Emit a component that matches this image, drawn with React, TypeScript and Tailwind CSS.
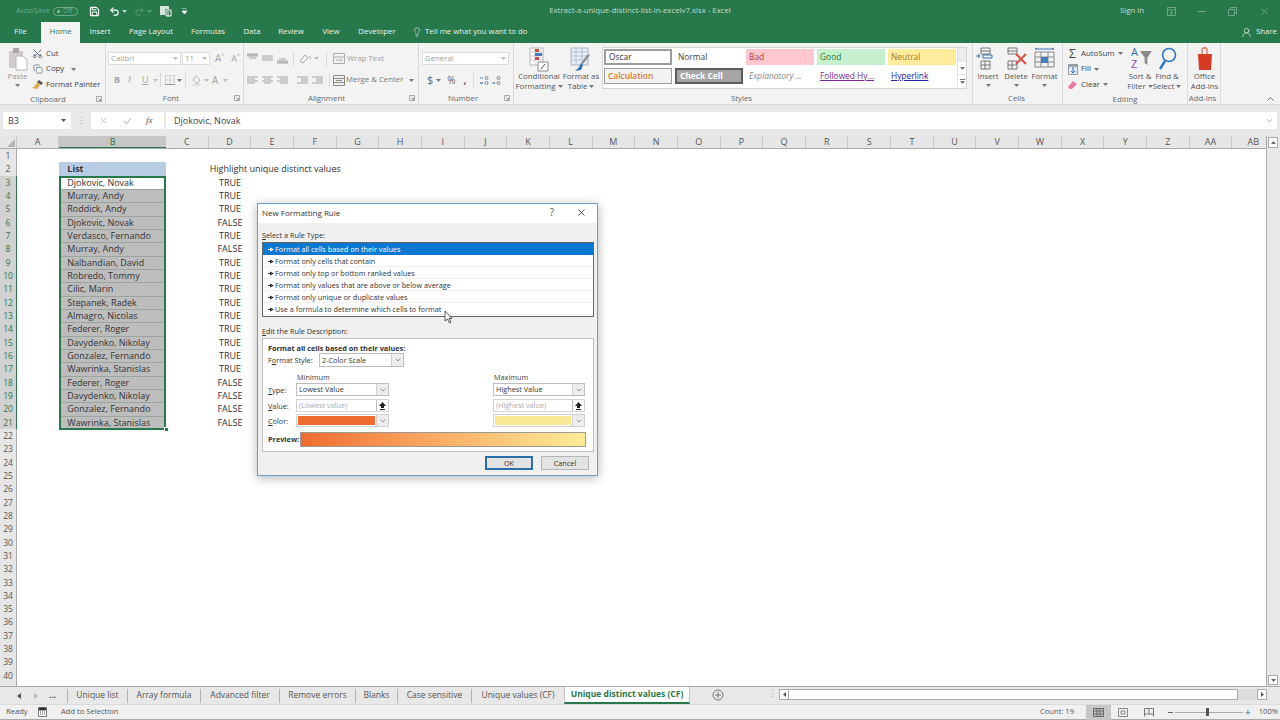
import { ChevronDown, Copy, Lightbulb, Redo2, Save, Scissors, Undo2, UserRound, X } from 'lucide-react'
import type { ReactNode } from 'react'

const NAMES = ['Djokovic, Novak', 'Murray, Andy', 'Roddick, Andy', 'Djokovic, Novak', 'Verdasco, Fernando', 'Murray, Andy', 'Nalbandian, David', 'Robredo, Tommy', 'Cilic, Marin', 'Stepanek, Radek', 'Almagro, Nicolas', 'Federer, Roger', 'Davydenko, Nikolay', 'Gonzalez, Fernando', 'Wawrinka, Stanislas', 'Federer, Roger', 'Davydenko, Nikolay', 'Gonzalez, Fernando', 'Wawrinka, Stanislas']
const FLAGS = ['TRUE', 'TRUE', 'TRUE', 'FALSE', 'TRUE', 'FALSE', 'TRUE', 'TRUE', 'TRUE', 'TRUE', 'TRUE', 'TRUE', 'TRUE', 'TRUE', 'TRUE', 'FALSE', 'FALSE', 'FALSE', 'FALSE']
const COLS = ['C', 'D', 'E', 'F', 'G', 'H', 'I', 'J', 'K', 'L', 'M', 'N', 'O', 'P', 'Q', 'R', 'S', 'T', 'U', 'V', 'W', 'X', 'Y', 'Z', 'AA', 'AB']
const RULES = ['Format all cells based on their values', 'Format only cells that contain', 'Format only top or bottom ranked values', 'Format only values that are above or below average', 'Format only unique or duplicate values', 'Use a formula to determine which cells to format']
const ROWS = Array.from({ length: 40 }, (_, i) => i + 1)

function Caret({ className = 'text-[#777]' }: { className?: string }) {
  return <svg width="5" height="3" viewBox="0 0 5 3" className={className}><path d="M0 0h5L2.5 3z" fill="currentColor" /></svg>
}

function Launcher() {
  return <svg width="6" height="6" viewBox="0 0 6 6" className="text-[#888]"><path d="M.5 5.5v-5h5v5zM2 2l2.5 2.5M4.5 3v1.5H3" fill="none" stroke="currentColor" strokeWidth=".7" /></svg>
}

function Group({ className, label, launcher, children }: { className: string; label?: string; launcher?: boolean; children: ReactNode }) {
  return (
    <div className={`flex h-full shrink-0 flex-col border-r border-[#dadada] ${className}`}>
      <div className="flex h-[50px]">{children}</div>
      <div className="flex h-[12px] items-center pr-[3px]">
        <span className="flex-1 whitespace-nowrap text-center text-[7.8px] leading-[12px] text-[#666]">{label}</span>
        {launcher && <Launcher />}
      </div>
    </div>
  )
}

function Tall({ className, icon, lines, caret }: { className: string; icon: ReactNode; lines: ReactNode[]; caret?: boolean }) {
  return (
    <div className={`flex shrink-0 flex-col items-center text-[7.8px] leading-[10px] text-[#555] ${className}`}>
      <div className="flex h-[28px] items-start justify-center pt-[4px]">{icon}</div>
      {lines.map((l, i) => <div key={i} className="flex h-[10px] items-center gap-[2px] whitespace-nowrap">{l}</div>)}
      {caret && <div className="mt-[3px]"><Caret /></div>}
    </div>
  )
}

function SmallRow({ icon, text, caret, caretClass = 'ml-[7px]' }: { icon: ReactNode; text: string; caret?: boolean; caretClass?: string }) {
  return (
    <div className="flex h-[15.5px] items-center whitespace-nowrap text-[7.8px] text-[#444]">
      <span className="flex w-[13px] justify-center">{icon}</span>
      <span className="ml-[2px]">{text}</span>
      {caret && <span className={caretClass}><Caret /></span>}
    </div>
  )
}

function Lines({ rows }: { rows: number[][] }) {
  return (
    <svg width="13" height="11" viewBox="0 0 13 11">
      {rows.map(([y, a, b], i) => <path key={i} d={`M${a} ${y}H${b}`} stroke="#a5a5a5" strokeWidth="1" />)}
    </svg>
  )
}

function Sep({ className = 'h-[14px]' }: { className?: string }) {
  return <div className={`w-px shrink-0 bg-[#d8d8d8] ${className}`} />
}

function GridIcon({ children }: { children?: ReactNode }) {
  return (
    <svg width="26" height="24" viewBox="0 0 26 24" fill="none">
      {children}
    </svg>
  )
}

function Titlebar() {
  return (
    <div className="flex h-[22px] items-center whitespace-nowrap bg-[#27784a] text-white [&>*]:shrink-0">
      <span className="ml-[16px] w-[34px] text-[7.8px] text-[#6fa98a]">AutoSave</span>
      <span className="ml-[3px] flex h-[9px] w-[25px] items-center gap-[3px] rounded-full border border-[#6fa98a] pl-[3px] text-[6.5px] text-[#6fa98a]">
        <span className="h-[3px] w-[3px] rounded-full bg-[#8fc0a5]" />Off
      </span>
      <Save size={11} className="ml-[11px]" strokeWidth={2.2} />
      <Undo2 size={11} className="ml-[9px]" strokeWidth={2.4} />
      <span className="ml-[2px]"><Caret className="text-[#bcd8c8]" /></span>
      <Redo2 size={11} className="ml-[7px] text-[#5f9f7c]" />
      <span className="ml-[2px]"><Caret className="text-[#5f9f7c]" /></span>
      <svg width="13" height="12" viewBox="0 0 13 12" className="ml-[7px]"><path d="M1 1h9v3H6v6H1z" fill="#d7e6dd" /><path d="M7 5h5v6H7z" fill="none" stroke="#fff" /><path d="M9 6v5" stroke="#fff" /></svg>
      <svg width="5" height="6" viewBox="0 0 5 6" className="ml-[10px]"><path d="M0 0h5M0 3h5L2.5 6z" stroke="#fff" strokeWidth=".8" fill="#fff" /></svg>
      <span className="ml-[349px] w-[208px] text-center text-[7.8px] text-[#c4dccf]">Extract-a-unique-distinct-list-in-excelv7.xlsx  -  Excel</span>
      <span className="ml-[367px] w-[42px] text-center text-[7.8px] text-[#c4dccf]">Sign in</span>
      <svg width="9" height="9" viewBox="0 0 9 9" className="ml-[14px] text-[#6fa98a]"><path d="M.5.5h8v8h-8zM.5 3h8M4.5 4.5v3M3 6h3" fill="none" stroke="currentColor" /></svg>
      <span className="ml-[22px] h-px w-[8px] bg-[#6fa98a]" />
      <svg width="9" height="9" viewBox="0 0 9 9" className="ml-[22px] text-[#6fa98a]"><path d="M.5 2.500h6v6h-6zM2.500 2.500v-2h6v6h-2" fill="none" stroke="currentColor" /></svg>
      <X size={11} className="ml-[22px] text-[#6fa98a]" />
    </div>
  )
}

function Tabs() {
  const tabs: [string, string][] = [['Insert', 'w-[40px]'], ['Page Layout', 'w-[62px]'], ['Formulas', 'w-[52px]'], ['Data', 'w-[36px]'], ['Review', 'w-[42px]'], ['View', 'w-[38px]'], ['Developer', 'w-[54px]']]
  return (
    <div className="flex h-[21px] whitespace-nowrap bg-[#27784a] pr-[3px] text-[7.8px] text-[#eaf3ee] [&>*]:shrink-0">
      <span className="flex w-[41px] items-center justify-center pb-[1px]">File</span>
      <span className="flex w-[39px] items-center justify-center bg-[#f3f3f3] pb-[1px] text-[#27784a]">Home</span>
      {tabs.map(([t, w]) => <span key={t} className={`flex items-center justify-center pb-[1px] ${w}`}>{t}</span>)}
      <Lightbulb size={10} className="ml-[8px] mt-[5px]" strokeWidth={1.4} />
      <span className="ml-[3px] flex items-center pb-[1px]">Tell me what you want to do</span>
      <UserRound size={11} className="ml-auto mt-[5px]" strokeWidth={1.4} />
      <span className="ml-[4px] flex items-center pb-[1px]">Share</span>
    </div>
  )
}

function StyleCell({ className, children }: { className: string; children: string }) {
  return <div className={`flex h-[16px] w-[68px] shrink-0 items-center overflow-hidden whitespace-nowrap pl-[3px] text-[8.4px] ${className}`}>{children}</div>
}

function Ribbon() {
  return (
    <div className="flex h-[62px] border-b border-[#d6d6d6] bg-[#f3f3f3] pr-[4px]">
      <Group className="w-[106px]" label="Clipboard" launcher>
        <Tall className="w-[31px] pl-[4px]" caret lines={[<span className="text-[#999]">Paste</span>]} icon={
          <svg width="20" height="24" viewBox="0 0 20 24"><path d="M1 4h14v17H1z" fill="#cfcbcb" /><path d="M5 1h6v5H5z" fill="#a9a6a6" /><path d="M8 9h7l4 4v10H8z" fill="#fff" stroke="#b5b5b5" /></svg>
        } />
        <div className="pt-[3px]">
          <SmallRow text="Cut" icon={<Scissors size={11} className="-rotate-90 text-[#5b6b7d]" />} />
          <SmallRow text="Copy" caret icon={<Copy size={10} className="text-[#7b8b9b]" />} />
          <SmallRow text="Format Painter" icon={
            <svg width="12" height="11" viewBox="0 0 12 11"><path d="M7 1l4 3-2 2-4-3z" fill="#555" /><path d="M5 3l3 3-3 4-5-1c2-1 4-3 5-6z" fill="#dca94a" /></svg>
          } />
        </div>
      </Group>

      <Group className="w-[138px] pl-[2px]" label="Font" launcher>
        <div className="flex flex-col">
          <div className="mt-[9px] flex h-[13px] items-center">
            <div className="flex h-[13px] w-[73px] items-center justify-between border border-[#dcdcdc] bg-white px-[2px] text-[7.8px] text-[#a0a0a0]">Calibri<Caret className="text-[#bbb]" /></div>
            <div className="ml-px flex h-[13px] w-[28px] items-center justify-between border border-[#dcdcdc] bg-white px-[2px] text-[7.8px] text-[#a0a0a0]">11<Caret className="text-[#bbb]" /></div>
            <span className="ml-[5px] text-[10px] text-[#a5a5a5]">A</span><span className="mb-[5px] text-[5px] text-[#a5a5a5]">˄</span>
            <span className="ml-[7px] text-[9px] text-[#a5a5a5]">A</span><span className="mb-[5px] text-[5px] text-[#a5a5a5]">˅</span>
          </div>
          <div className="mt-[8px] flex h-[14px] items-center text-[9px] text-[#a5a5a5]">
            <span className="ml-[6px] w-[14px] font-bold">B</span>
            <span className="w-[14px] italic font-['Liberation_Serif']">I</span>
            <span className="w-[10px] underline">U</span>
            <span className="ml-[1px] w-[7px]"><Caret className="text-[#bbb]" /></span>
            <Sep />
            <span className="ml-[4px]"><svg width="10" height="10" viewBox="0 0 10 10"><path d="M.5.5h9v9h-9zM5 .5v9M.5 5h9" stroke="#b5b5b5" fill="none" strokeDasharray="1 1" /><path d="M0 9.5h10" stroke="#999" /></svg></span>
            <span className="ml-[2px] w-[6px]"><Caret /></span>
            <span className="ml-[2px]"><Sep /></span>
            <span className="ml-[5px]"><svg width="11" height="11" viewBox="0 0 11 11"><path d="M5 1l4 4-3 4-4-4z" fill="none" stroke="#b5b5b5" /><path d="M1 9h9v2H1z" fill="#e4e4e4" /></svg></span>
            <span className="ml-[2px] w-[8px]"><Caret className="text-[#bbb]" /></span>
            <span className="w-[8px] text-[10px]">A</span>
            <span className="ml-[3px]"><Caret className="text-[#bbb]" /></span>
          </div>
        </div>
      </Group>

      <Group className="w-[175px]" label="Alignment" launcher>
        <div className="flex flex-col whitespace-nowrap pl-[2px]">
          <div className="mt-[9px] flex h-[13px] items-center">
            <Lines rows={[[1, 1, 12], [2, 1, 12], [3, 1, 12], [5, 3, 10]]} />
            <span className="ml-[2px]"><Lines rows={[[3, 1, 12], [5, 1, 12], [7, 1, 12]]} /></span>
            <span className="ml-[2px]"><Lines rows={[[6, 3, 10], [8, 1, 12], [9, 1, 12], [10, 1, 12]]} /></span>
            <span className="mx-[4px]"><Sep /></span>
            <svg width="13" height="11" viewBox="0 0 13 11" className="ml-[1px]"><path d="M1 8l5-6 3 3-5 5zM10 3l2 3" stroke="#a8a8a8" fill="none" /></svg>
            <span className="ml-[2px]"><Caret className="text-[#bbb]" /></span>
            <span className="ml-[7px]"><Sep /></span>
            <svg width="12" height="11" viewBox="0 0 12 11" className="ml-[6px]"><path d="M.5.5h11v10H.5zM.5 4h11M3 7h6l-1-1M9 7l-1 1" stroke="#aaa" fill="none" /></svg>
            <span className="ml-[2px] text-[7.8px] text-[#a0a0a0]">Wrap Text</span>
          </div>
          <div className="mt-[8px] flex h-[14px] items-center">
            <Lines rows={[[2, 1, 12], [4, 1, 9], [6, 1, 12], [8, 1, 9]]} />
            <span className="ml-[2px]"><Lines rows={[[2, 1, 12], [4, 3, 10], [6, 1, 12], [8, 3, 10]]} /></span>
            <span className="ml-[2px]"><Lines rows={[[2, 1, 12], [4, 4, 12], [6, 1, 12], [8, 4, 12]]} /></span>
            <span className="w-[7px]" />
            <Lines rows={[[2, 1, 12], [4, 5, 12], [6, 5, 12], [8, 1, 12]]} />
            <span className="ml-[2px]"><Lines rows={[[2, 1, 12], [4, 5, 12], [6, 5, 12], [8, 1, 12]]} /></span>
            <span className="ml-[5px]"><Sep /></span>
            <svg width="12" height="11" viewBox="0 0 12 11" className="ml-[3px]"><path d="M.5.5h11v10H.5zM.5 3.500h11M.5 7.500h11M3 5.500h6" stroke="#888" fill="none" /></svg>
            <span className="ml-px text-[7.8px] text-[#777]">Merge &amp; Center</span>
            <span className="ml-[6px]"><Caret /></span>
          </div>
        </div>
      </Group>

      <Group className="w-[95px] pl-[3px]" label="Number" launcher>
        <div className="flex flex-col">
          <div className="mt-[9px] flex h-[13px] w-[87px] items-center justify-between border border-[#dcdcdc] bg-white px-[2px] text-[7.8px] text-[#a0a0a0]">General<Caret className="text-[#bbb]" /></div>
          <div className="mt-[8px] flex h-[14px] items-center text-[#666]">
            <span className="ml-[5px] text-[11px]">$</span>
            <span className="ml-[3px]"><Caret /></span>
            <span className="ml-[6px] text-[10px]">%</span>
            <span className="ml-[8px] text-[10px] font-bold">,</span>
            <span className="ml-[7px]"><Sep /></span>
            <svg width="11" height="11" viewBox="0 0 11 11" className="ml-[5px]"><path d="M1 3h3M1 8h3l-1-1M1 8l2 1" stroke="#5b86b5" fill="none" /><circle cx="7.5" cy="3" r="1.5" fill="none" stroke="#888" /><circle cx="7.5" cy="8" r="1.5" fill="none" stroke="#888" /></svg>
            <svg width="11" height="11" viewBox="0 0 11 11" className="ml-[1px]"><circle cx="7.5" cy="3" r="1.5" fill="none" stroke="#888" /><circle cx="7.5" cy="8" r="1.5" fill="none" stroke="#888" /><path d="M1 8h3l-1-1M4 8l-1 1" stroke="#5b86b5" fill="none" /></svg>
          </div>
        </div>
      </Group>

      <Group className="w-[459px]" label="Styles">
        <Tall className="w-[50px]" lines={['Conditional', <>Formatting <Caret /></>]} icon={
          <svg width="20" height="25" viewBox="0 0 20 25"><path d="M1 1h13v17H1z" fill="#fff" stroke="#b5b5b5" /><path d="M6 1v17M1 5h13M1 9h13M1 13h13" stroke="#cfcfcf" /><path d="M6 2h4v3H6z" fill="#d9453a" /><path d="M6 6h7v3H6z" fill="#3f7fc0" /><path d="M6 10h4v3H6z" fill="#d9453a" /><path d="M9 15h10v9H9z" fill="#fff" stroke="#8a8a8a" /><path d="M12 22l4-5" stroke="#555" /></svg>
        } />
        <Tall className="w-[34px]" lines={['Format as', <>Table <Caret /></>]} icon={
          <svg width="22" height="25" viewBox="0 0 22 25"><path d="M1 1h17v17H1z" fill="#e6edf6" stroke="#a9b4c2" /><path d="M1 5h17M1 9h17M1 13h17M6 1v17M12 1v17" stroke="#b7c2d1" /><path d="M20 8l-7 9-2-1 7-9z" fill="#8d8d8d" /><path d="M11 16l2 2-2 5-6 1c3-2 5-5 6-8z" fill="#2f6fb5" /></svg>
        } />
        <div className="ml-[4px] mt-[4px] flex h-[42px] w-[365px] shrink-0 border border-[#d4d4d4] bg-white">
          <div className="flex flex-1 flex-col justify-between p-px">
            <div className="flex gap-[3px]">
              <StyleCell className="border-2 border-[#9c9c9c] bg-white text-[#333]">Oscar</StyleCell>
              <StyleCell className="text-[#444]">Normal</StyleCell>
              <StyleCell className="bg-[#ffc7ce] text-[#b03a45]">Bad</StyleCell>
              <StyleCell className="bg-[#c6efce] text-[#2a7a33]">Good</StyleCell>
              <StyleCell className="bg-[#ffeb9c] text-[#a9761a]">Neutral</StyleCell>
            </div>
            <div className="mb-[3px] flex gap-[3px]">
              <StyleCell className="border border-[#9c9c9c] bg-[#f2f2f2] font-semibold text-[#e0791f]">Calculation</StyleCell>
              <StyleCell className="border-2 border-[#5c5c5c] bg-[#a5a5a5] font-bold text-white">Check Cell</StyleCell>
              <StyleCell className="italic text-[#888]">Explanatory ...</StyleCell>
              <StyleCell className="text-[#7a2a90] underline">Followed Hy...</StyleCell>
              <StyleCell className="text-[#2222aa] underline">Hyperlink</StyleCell>
            </div>
          </div>
          <div className="flex w-[10px] flex-col border-l border-[#e2e2e2]">
            <div className="h-[14px] border-b border-[#e2e2e2] bg-[#ececec]" />
            <div className="flex h-[13px] items-center justify-center border-b border-[#e2e2e2]"><Caret /></div>
            <div className="flex flex-1 flex-col items-center justify-center gap-[1px]"><span className="h-px w-[5px] bg-[#777]" /><Caret /></div>
          </div>
        </div>
      </Group>

      <Group className="w-[90px] pl-[1px]" label="Cells">
        <Tall className="w-[28px]" caret lines={['Insert']} icon={
          <GridIcon><path d="M6 1h9v6H6zM6 4h9M6 14h9v8H6zM10 14v8M6 18h9" stroke="#777" /><path d="M1 9h4l-2-2M5 9l-2 2M8 8h9v3H8z" stroke="#3470b3" /></GridIcon>
        } />
        <Tall className="w-[28px]" caret lines={['Delete']} icon={
          <GridIcon><path d="M5 1h9v6H5zM5 4h9M5 14h9v8H5zM9 14v8M5 18h9" stroke="#777" /><path d="M13 7l10 10M23 7L13 17" stroke="#d9503f" strokeWidth="2" /></GridIcon>
        } />
        <Tall className="w-[29px]" caret lines={['Format']} icon={
          <GridIcon><path d="M3 5h19v15H3zM3 10h19M3 15h19M9 5v15M16 5v15" stroke="#888" /><path d="M3 2h19M3 2l2-1M22 2l-2-1" stroke="#3470b3" /><path d="M9 10h7v6H9z" fill="#3f7fc0" /></GridIcon>
        } />
      </Group>

      <Group className="w-[125px] pl-[3px]" label="Editing">
        <div className="w-[61px] shrink-0 pt-[3px]">
          <SmallRow text="AutoSum" caret caretClass="ml-[4px]" icon={<span className="text-[12px] leading-[12px] text-[#444]">Σ</span>} />
          <SmallRow text="Fill" caret caretClass="ml-[3px]" icon={<svg width="10" height="11" viewBox="0 0 10 11"><path d="M.5.5h9v10h-9z" fill="#dde8f4" stroke="#999" /><path d="M.5 2h9" stroke="#666" /><path d="M5 3v6M3 7l2 2 2-2" stroke="#2f6fb5" fill="none" /></svg>} />
          <SmallRow text="Clear" caret caretClass="ml-[3px]" icon={<svg width="11" height="10" viewBox="0 0 11 10"><path d="M1 7l5-6 4 3-5 5H3z" fill="#e97aa0" /></svg>} />
        </div>
        <Tall className="w-[26px]" lines={['Sort &', <>Filter <Caret /></>]} icon={
          <div className="relative h-[24px] w-[24px]">
            <span className="absolute left-[3px] top-[-2px] text-[11px] leading-[13px] text-[#2f6fb5]">A</span>
            <span className="absolute left-[3px] top-[10px] text-[11px] leading-[13px] text-[#8e4aa8]">Z</span>
            <svg width="12" height="15" viewBox="0 0 13 16" className="absolute left-[12px] top-[4px]"><path d="M0 0h13L8 7v8l-3-2V7z" fill="#8b8b8b" /></svg>
          </div>
        } />
        <Tall className="w-[28px]" lines={['Find &', <>Select <Caret /></>]} icon={
          <svg width="20" height="24" viewBox="0 0 20 24" fill="none" stroke="#2f78c4" strokeWidth="1.6"><circle cx="12" cy="8" r="6.5" /><path d="M8 14l-5 8" strokeWidth="2.4" /></svg>
        } />
      </Group>

      <Group className="w-[33px]" label="Add-ins">
        <Tall className="w-[33px]" lines={['Office', 'Add-ins']} icon={
          <svg width="16" height="24" viewBox="0 0 16 24"><path d="M1 7h14l-1 16H2z" fill="#d83b23" /><path d="M5 7V3c0-3 5-3 5 0v4" fill="none" stroke="#e9735c" strokeWidth="1.4" /></svg>
        } />
      </Group>
      <div className="flex flex-1 items-end justify-end pb-[3px] pr-[2px]">
        <svg width="7" height="4" viewBox="0 0 7 4"><path d="M.5 3.5l3-3 3 3" stroke="#666" fill="none" /></svg>
      </div>
    </div>
  )
}

function FormulaBar() {
  return (
    <div className="flex h-[31px] items-center bg-[#e8e8e8] pl-[3px] pr-[3px] text-[9px]">
      <div className="flex h-[17px] w-[68px] items-center justify-between bg-white px-[5px] text-[#444]">B3<Caret className="text-[#555]" /></div>
      <span className="flex w-[20px] justify-center text-[#aaa]">⋮</span>
      <div className="flex h-[17px] w-[73px] items-center bg-white pl-[8px] text-[#b0b0b0]">
        <X size={9} /><svg width="9" height="8" viewBox="0 0 9 8" className="ml-[15px]"><path d="M1 4l2.500 3L8 1" stroke="currentColor" fill="none" /></svg>
        <span className="ml-[14px] font-['Liberation_Serif'] text-[9px] italic text-[#555]">fx</span>
      </div>
      <div className="ml-[2px] flex h-[17px] flex-1 items-center justify-between bg-white pl-[8px] pr-[3px] text-[9px] text-[#444]">
        Djokovic, Novak
        <ChevronDown size={9} className="text-[#999]" />
      </div>
    </div>
  )
}

function Sheet() {
  return (
    <div className="relative flex min-h-0 flex-1 overflow-hidden bg-white">
      <div className="relative min-w-0 flex-1 overflow-hidden border-r border-[#ababab]">
        <div className="flex h-[13px] border-b border-[#ababab] bg-[#e6e6e6] text-[9px] leading-[12px] text-[#555]">
          <div className="flex w-[17px] shrink-0 items-end justify-end border-r border-[#c6c6c6] p-[1px]">
            <svg width="8" height="8" viewBox="0 0 8 8"><path d="M8 0v8H0z" fill="#b5b5b5" /></svg>
          </div>
          <div className="w-[42.3px] shrink-0 border-r border-[#c6c6c6] text-center">A</div>
          <div className="w-[106.7px] shrink-0 border-b border-[#27784a] bg-[#c6c6c6] text-center text-[#27784a]">B</div>
          {COLS.map(c => <div key={c} className="w-[42.66px] shrink-0 border-r border-[#c6c6c6] text-center">{c}</div>)}
        </div>
        {ROWS.map(r => {
          const picked = r >= 3 && r <= 21
          return (
            <div key={r} className="flex h-[13.33px] text-[9px] leading-[13.33px] text-[#333]">
              <div className={`w-[17px] shrink-0 border-r text-center text-[8.5px] ${picked ? 'border-[#27784a] bg-[#d2d2d2] text-[#27784a]' : 'border-[#ababab] bg-[#e6e6e6] text-[#555]'}`}>{r}</div>
              <div className="w-[42.3px] shrink-0" />
              {r === 2 && <div className="w-[106.7px] shrink-0 bg-[#b8cce4] pl-[8px] font-bold">List</div>}
              {r === 3 && <div className="w-[106.7px] shrink-0 pl-[8px]">{NAMES[0]}</div>}
              {r > 3 && picked && <div className="w-[106.7px] shrink-0 border-t border-[#9aa59d] bg-[#bdbdbd] pl-[8px] leading-[12.33px]">{NAMES[r - 3]}</div>}
              {!picked && r !== 2 && <div className="w-[106.7px] shrink-0" />}
              <div className="w-[42.66px] shrink-0" />
              {picked && <div className="w-[42.66px] shrink-0 text-center">{FLAGS[r - 3]}</div>}
              {r === 2 && <div className="pl-[1px]">Highlight unique distinct values</div>}
            </div>
          )
        })}
        <div className="h-[4px] w-[17px] border-r border-[#ababab] bg-[#e6e6e6]" />
        <div className="absolute left-[59px] top-[40px] h-[254px] w-[107px] border-2 border-[#27784a]" />
        <div className="absolute left-[163.5px] top-[291px] h-[5px] w-[5px] border border-white bg-[#27784a]" />
      </div>
      <div className="flex w-[13px] shrink-0 flex-col justify-between bg-[#e8e8e8] py-[1px] pl-[1px] pr-[2px]">
        <div className="flex h-[11px] items-center justify-center border border-[#ababab] bg-white"><Caret className="rotate-180 text-[#666]" /></div>
        <div className="flex h-[10px] items-center justify-center border border-[#ababab] bg-white"><Caret className="text-[#666]" /></div>
      </div>
    </div>
  )
}

function SheetTabs() {
  const tabs: [string, string][] = [['Unique list', 'w-[60px]'], ['Array formula', 'w-[73px]'], ['Advanced filter', 'w-[79px]'], ['Remove errors', 'w-[76px]'], ['Blanks', 'w-[42px]'], ['Case sensitive', 'w-[74px]'], ['Unique values (CF)', 'w-[93px]']]
  return (
    <div className="flex h-[18px] border-t border-[#ababab] bg-[#e8e8e8] text-[8.5px] text-[#555]">
      <div className="flex w-[67px] items-center pl-[17px]">
        <svg width="4" height="6" viewBox="0 0 4 6"><path d="M4 0v6L0 3z" fill="#555" /></svg>
        <svg width="4" height="6" viewBox="0 0 4 6" className="ml-[13px]"><path d="M0 0v6l4-3z" fill="#bbb" /></svg>
        <span className="ml-[11px] font-bold">...</span>
      </div>
      {tabs.map(([t, w]) => (
        <div key={t} className={`flex h-[14px] items-center justify-center self-center border-l border-[#b5b5b5] ${w}`}>{t}</div>
      ))}
      <div className="flex h-[17px] w-[126px] items-center justify-center border-x border-[#c0c0c0] border-b-2 border-b-[#27784a] bg-white font-bold text-[#27784a]">Unique distinct values (CF)</div>
      <svg width="12" height="12" viewBox="0 0 12 12" className="ml-[22px] mt-[2px]"><circle cx="6" cy="6" r="5" fill="none" stroke="#777" /><path d="M3 6h6M6 3v6" stroke="#777" /></svg>
      <span className="ml-[44px] mt-[1px] text-[#aaa]">⋮</span>
      <div className="ml-[2px] mt-[2px] flex h-[11px] w-[459px] border border-[#ababab] bg-white">
        <div className="flex w-[9px] items-center justify-center border-r border-[#ababab]"><svg width="3" height="5" viewBox="0 0 3 5"><path d="M3 0v5L0 2.5z" fill="#555" /></svg></div>
        <div className="flex-1" />
      </div>
      <div className="mt-[2px] h-[11px] w-[19px] bg-[#dcdcdc]" />
      <div className="mt-[2px] flex h-[11px] w-[10px] items-center justify-center border border-[#ababab] bg-white"><svg width="3" height="5" viewBox="0 0 3 5"><path d="M0 0v5l3-2.5z" fill="#555" /></svg></div>
    </div>
  )
}

function StatusBar() {
  return (
    <div className="flex h-[16px] items-center whitespace-nowrap border-t border-[#dadada] border-b border-b-[#aaa] bg-[#f0f0f0] text-[7.6px] text-[#555]">
      <span className="ml-[6px] w-[32px]">Ready</span>
      <svg width="9" height="10" viewBox="0 0 9 10"><path d="M.5.5h8v9h-8z" fill="#fff" stroke="#777" /><path d="M1 1h7v2H1zM2 5h1M4 5h1M6 5h1M2 7h1M4 7h1M6 7h1" stroke="#555" /></svg>
      <span className="ml-[14px] w-[57px]">Add to Selection</span>
      <span className="ml-[922px] w-[46px]">Count: 19</span>
      <div className="flex h-[15px] w-[25px] items-center justify-center bg-[#c6c6c6]"><svg width="11" height="9" viewBox="0 0 11 9"><path d="M.5.5h10v8H.5zM4 .5v8M7 .5v8M.5 3h10M.5 6h10" stroke="#666" fill="none" /></svg></div>
      <svg width="10" height="9" viewBox="0 0 10 9" className="ml-[7px]"><path d="M.5.5h9v8h-9zM3 3h4v3H3z" stroke="#888" fill="none" /></svg>
      <svg width="10" height="9" viewBox="0 0 10 9" className="ml-[16px]"><path d="M.5 8.500v-8h9v8M.5 6h9M5 1v5" stroke="#777" fill="none" /></svg>
      <span className="ml-[14px] h-px w-[5px] bg-[#666]" />
      <div className="relative ml-[2px] flex h-[9px] w-[68px] items-center">
        <div className="h-px w-full bg-[#aaa]" />
        <div className="absolute left-[31px] h-[8px] w-[3px] bg-[#555]" />
      </div>
      <span className="ml-[2px] text-[10px] leading-[10px]">+</span>
      <span className="ml-[8px]">100%</span>
    </div>
  )
}

function Combo({ text, className, muted }: { text: string; className: string; muted?: boolean }) {
  return (
    <div className={`flex items-center border border-[#bdbdbd] bg-white ${className}`}>
      <span className={`flex-1 whitespace-nowrap pl-[2px] ${muted ? 'text-[#999]' : 'text-[#333]'}`}>{text}</span>
      <div className="flex h-full w-[12px] items-center justify-center border-l border-[#cfcfcf] bg-[#ededed]"><ChevronDown size={8} className="text-[#666]" /></div>
    </div>
  )
}

function ValueBox({ text, className }: { text: string; className: string }) {
  return (
    <div className={`flex h-[13px] items-center border border-[#d2d2d2] bg-white ${className}`}>
      <span className="flex-1 whitespace-nowrap pl-[2px] text-[#aaa]">{text}</span>
      <div className="flex h-full w-[12px] items-center justify-center border-l border-[#bdbdbd]"><svg width="7" height="8" viewBox="0 0 7 8"><path d="M3.500 0L7 4H5v2H2V4H0zM1 7h5v1H1z" fill="#222" /></svg></div>
    </div>
  )
}

function ColorBox({ fill, className }: { fill: string; className: string }) {
  return (
    <div className={`flex h-[13px] items-center border border-[#d2d2d2] bg-white pl-[1px] ${className}`}>
      <div className={`mr-px h-[9px] flex-1 ${fill}`} />
      <div className="flex h-full w-[12px] items-center justify-center border-l border-[#cfcfcf] bg-[#ededed]"><ChevronDown size={8} className="text-[#666]" /></div>
    </div>
  )
}

function Dialog() {
  return (
    <div className="absolute left-[257px] top-[203px] flex h-[273px] w-[341px] flex-col whitespace-nowrap border border-[#6e9fc8] bg-[#f0f0f0] text-[7.3px] text-[#333] shadow-[0_2px_10px_rgba(0,0,0,0.3)]">
      <div className="flex h-[19px] shrink-0 items-center bg-white pb-[2px] pl-[4px] pr-[10px] text-[8px]">
        <span className="flex-1">New Formatting Rule</span>
        <span className="text-[10px] text-[#555]">?</span>
        <X size={11} className="ml-[22px] text-[#444]" />
      </div>
      <div className="px-[4px]">
        <div className="flex h-[19px] items-end pb-px"><span><u>S</u>elect a Rule Type:</span></div>
        <div className="h-[75px] w-[332px] border border-[#666] bg-white">
          {RULES.map((r, i) => (
            <div key={r} className={`flex h-[12px] items-center border-b pl-[5px] pt-px ${i === 0 ? 'border-transparent bg-[#0a78d0] text-white' : 'border-[#f0f0f0]'}`}>
              <svg width="6" height="5" viewBox="0 0 6 5" className="mr-px"><path d="M0 2.500h3" stroke="currentColor" /><path d="M2 .5l4 2-4 2z" fill="currentColor" /></svg>
              {r}
            </div>
          ))}
        </div>
        <div className="flex h-[21px] items-end pb-px"><span><u>E</u>dit the Rule Description:</span></div>
        <div className="h-[114px] w-[332px] border border-[#c0c0c0] bg-white px-[5px] pt-[4px]">
          <div className="h-[10px] font-bold leading-[10px]">Format all cells based on their values:</div>
          <div className="flex items-center">
            <span className="w-[51px]">F<u>o</u>rmat Style:</span>
            <Combo text="2-Color Scale" className="h-[14px] w-[85px]" />
          </div>
          <div className="mb-px mt-[4px] flex h-[11px] items-center leading-[10px] text-[#444]">
            <span className="ml-[29px] w-[197px]">Minimum</span>
            <span>Maximum</span>
          </div>
          <div className="flex items-center">
            <span className="w-[28px] pt-px"><u>T</u>ype:</span>
            <Combo text="Lowest Value" className="h-[13px] w-[93px]" />
            <span className="w-[104px]" />
            <Combo text="Highest Value" className="h-[13px] w-[92px]" />
          </div>
          <div className="mt-[3px] flex items-center">
            <span className="w-[28px] pt-px"><u>V</u>alue:</span>
            <ValueBox text="(Lowest value)" className="w-[93px]" />
            <span className="w-[104px]" />
            <ValueBox text="(Highest value)" className="w-[92px]" />
          </div>
          <div className="mt-[2px] flex items-center">
            <span className="w-[28px] pt-px"><u>C</u>olor:</span>
            <ColorBox fill="bg-[#ef6b2e]" className="w-[93px]" />
            <span className="w-[104px]" />
            <ColorBox fill="bg-[#fbe894]" className="w-[92px]" />
          </div>
          <div className="mt-[5px] flex items-center">
            <span className="w-[32px] font-bold">Preview:</span>
            <div className="h-[15px] w-[286px] border border-[#9a9a9a] bg-gradient-to-r from-[#ef6b2e] to-[#fbec98]" />
          </div>
        </div>
        <div className="mt-[4px] flex justify-end gap-[8px] pr-[4px]">
          <div className="flex h-[14px] w-[48px] items-center justify-center border-2 border-[#2a6fa8] bg-[#e3e3e3]">OK</div>
          <div className="flex h-[14px] w-[48px] items-center justify-center border border-[#b5b5b5] bg-[#e3e3e3]">Cancel</div>
        </div>
      </div>
    </div>
  )
}

export default function App() {
  return (
    <div className="relative flex h-[720px] w-[1280px] flex-col overflow-hidden bg-white font-['Open_Sans',sans-serif]">
      <Titlebar />
      <Tabs />
      <Ribbon />
      <FormulaBar />
      <Sheet />
      <SheetTabs />
      <StatusBar />
      <Dialog />
      <svg width="9" height="14" viewBox="0 0 9 14" className="absolute left-[444px] top-[310px]">
        <path d="M1 1v10l2.500-2 2 4 1.500-.8-2-3.700H8z" fill="#fff" stroke="#333" strokeWidth=".8" />
      </svg>
    </div>
  )
}
